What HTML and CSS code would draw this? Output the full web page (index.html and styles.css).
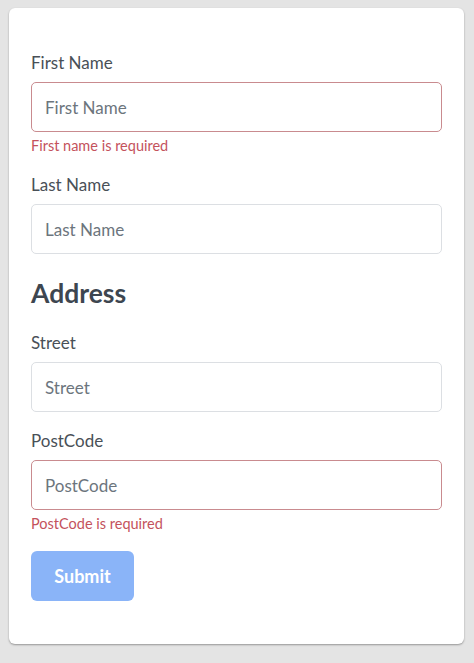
FILE: index.html
```html
<!DOCTYPE html>
<html lang="en">
<head>
<meta charset="utf-8">
<title>Form</title>
<link rel="stylesheet" href="styles.css">
</head>
<body>
<div class="card">
  <form class="form">
    <div class="group">
      <label class="label">First Name</label>
      <input class="input invalid" type="text" placeholder="First Name">
      <div class="error">First name is required</div>
    </div>
    <div class="group">
      <label class="label">Last Name</label>
      <input class="input" type="text" placeholder="Last Name">
    </div>
    <h2 class="heading">Address</h2>
    <div class="group">
      <label class="label">Street</label>
      <input class="input" type="text" placeholder="Street">
    </div>
    <div class="group">
      <label class="label">PostCode</label>
      <input class="input invalid" type="text" placeholder="PostCode">
      <div class="error">PostCode is required</div>
    </div>
    <button class="submit" type="button">Submit</button>
  </form>
</div>
</body>
</html>
```

FILE: styles.css
```css
* { box-sizing: border-box; }
html, body { margin: 0; padding: 0; }
body {
  background: #e4e4e4;
  font-family: Lato, "Open Sans", sans-serif;
  padding: 8px 10px 18px 9px;
}
.card {
  background: #fff;
  border-radius: 6px;
  box-shadow: 0 1px 2px rgba(0,0,0,0.35);
  padding: 42px 22px 43px;
}
.form { display: flex; flex-direction: column; align-items: stretch; }
.group { display: flex; flex-direction: column; margin-bottom: 16px; }
.label {
  font-size: 17px;
  line-height: 25px;
  color: #495057;
  margin-bottom: 7px;
}
.input {
  height: 50px;
  border: 1px solid #dcdfe3;
  border-radius: 5px;
  padding: 0 13px;
  font-family: inherit;
  font-size: 17px;
  color: #495057;
  outline: none;
}
.input::placeholder { color: #6c757d; }
.input.invalid { border-color: #c98b8f; }
.error {
  font-size: 14.5px;
  line-height: 21px;
  color: #c4525c;
  margin-top: 3px;
}
.heading {
  font-size: 26.5px;
  line-height: 30px;
  font-weight: 700;
  color: #3d4650;
  margin: 8px 0 22px;
}
.submit {
  align-self: flex-start;
  width: 103px;
  height: 50px;
  margin-top: 1px;
  border: none;
  border-radius: 6px;
  background: #8ab4f8;
  color: #fff;
  font-family: inherit;
  font-size: 18px;
  font-weight: 700;
}
```
